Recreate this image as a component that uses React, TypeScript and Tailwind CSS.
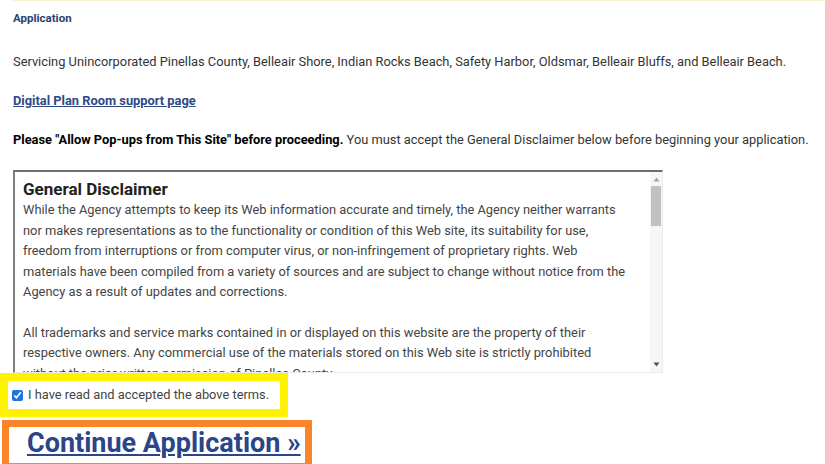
import React from 'react';

const disclaimer = [
  'While the Agency attempts to keep its Web information accurate and timely, the Agency neither warrants nor makes representations as to the functionality or condition of this Web site, its suitability for use, freedom from interruptions or from computer virus, or non-infringement of proprietary rights. Web materials have been compiled from a variety of sources and are subject to change without notice from the Agency as a result of updates and corrections.',
  'All trademarks and service marks contained in or displayed on this website are the property of their respective owners. Any commercial use of the materials stored on this Web site is strictly prohibited without the prior written permission of Pinellas County.',
  'Pinellas County does not endorse any products or services referenced on this Web site. Links to other sites are provided for convenience only and do not constitute an endorsement.',
];

export default function App() {
  return (
    <div className="w-[825px] h-[464px] overflow-hidden bg-white font-['Roboto',sans-serif] text-[#333]">
      <div className="ml-[13px] border-t border-[#fbf2cf]">
        <div className="pt-[9px] text-[11.5px] leading-4 font-bold text-[#29436b]">Application</div>

        <p className="mt-[26px] text-[12.85px] leading-5">
          Servicing Unincorporated Pinellas County, Belleair Shore, Indian Rocks Beach, Safety Harbor, Oldsmar, Belleair Bluffs, and Belleair Beach.
        </p>

        <p className="mt-[19px] text-[12.85px] leading-5">
          <a href="#" className="font-bold text-[#2d4a86] underline">Digital Plan Room support page</a>
        </p>

        <p className="mt-[19px] text-[12.85px] leading-5">
          <span className="font-bold text-black">Please "Allow Pop-ups from This Site" before proceeding.</span> You must accept the General Disclaimer below before beginning your application.
        </p>

        <div className="mt-[20px] w-[650px] h-[203px] flex border-t-2 border-l-2 border-r border-b border-t-[#6e6e6e] border-l-[#7e7e7e] border-r-[#ecece6] border-b-[#ecece6]">
          <div className="flex-1 overflow-hidden pl-2 pr-[20px] pt-[6px]">
            <h3 className="text-[17px] leading-[22px] font-bold text-[#222]">General Disclaimer</h3>
            {disclaimer.map((para, i) => (
              <p key={i} className="text-[12.85px] leading-[20.5px] text-[#444] mb-[20px]">{para}</p>
            ))}
          </div>
          <div className="w-[12px] flex flex-col items-center bg-[#f6f6f4] py-[3px]">
            <svg width="7" height="5" viewBox="0 0 7 5" className="mt-[2px]">
              <path d="M3.5 0.5 L6.5 4.5 L0.5 4.5 Z" fill="#a3a3a3" />
            </svg>
            <div className="mt-[4px] w-[10px] h-[40px] bg-[#c1c1c1]" />
            <div className="flex-1" />
            <svg width="7" height="5" viewBox="0 0 7 5" className="mb-[2px]">
              <path d="M0.5 0.5 L6.5 0.5 L3.5 4.5 Z" fill="#505050" />
            </svg>
          </div>
        </div>
      </div>

      <label className="flex items-center gap-[5px] w-[288px] h-[44px] border-8 border-[#fff200] pl-[4px] text-[12.85px] leading-4 text-[#444]">
        <input type="checkbox" defaultChecked className="w-[11px] h-[11px] accent-[#1a73e8]" />
        I have read and accepted the above terms.
      </label>

      <div className="ml-[2px] mt-[3px] w-[310px] h-[50px] border-[7px] border-[#f98429] pl-[18px] pt-[2px] overflow-hidden">
        <a href="#" className="block text-[27px] leading-[29px] font-bold text-[#2a4689] underline decoration-2 underline-offset-2 whitespace-nowrap">
          Continue Application »
        </a>
      </div>
    </div>
  );
}
